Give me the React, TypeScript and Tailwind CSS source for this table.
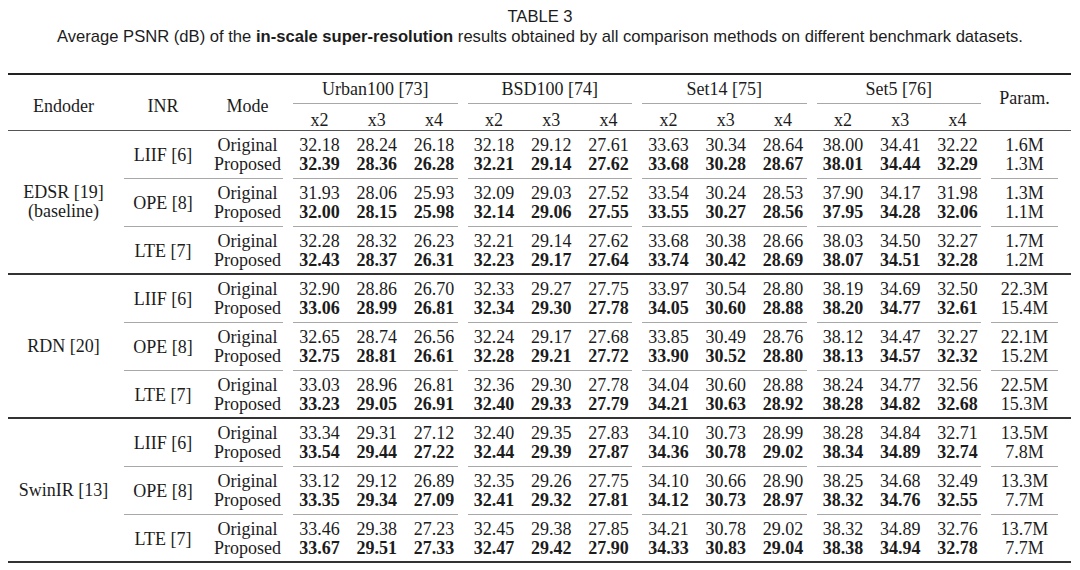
const serif = { fontFamily: '"Liberation Serif", "Times New Roman", serif' };

type Group = { inr: string; orig: string[]; prop: string[] };
type Block = { enc: string[]; groups: Group[] };

const blocks: Block[] = [
  {
    enc: ["EDSR [19]", "(baseline)"],
    groups: [
      {
        inr: "LIIF [6]",
        orig: ["32.18", "28.24", "26.18", "32.18", "29.12", "27.61", "33.63", "30.34", "28.64", "38.00", "34.41", "32.22", "1.6M"],
        prop: ["32.39", "28.36", "26.28", "32.21", "29.14", "27.62", "33.68", "30.28", "28.67", "38.01", "34.44", "32.29", "1.3M"],
      },
      {
        inr: "OPE [8]",
        orig: ["31.93", "28.06", "25.93", "32.09", "29.03", "27.52", "33.54", "30.24", "28.53", "37.90", "34.17", "31.98", "1.3M"],
        prop: ["32.00", "28.15", "25.98", "32.14", "29.06", "27.55", "33.55", "30.27", "28.56", "37.95", "34.28", "32.06", "1.1M"],
      },
      {
        inr: "LTE [7]",
        orig: ["32.28", "28.32", "26.23", "32.21", "29.14", "27.62", "33.68", "30.38", "28.66", "38.03", "34.50", "32.27", "1.7M"],
        prop: ["32.43", "28.37", "26.31", "32.23", "29.17", "27.64", "33.74", "30.42", "28.69", "38.07", "34.51", "32.28", "1.2M"],
      },
    ],
  },
  {
    enc: ["RDN [20]"],
    groups: [
      {
        inr: "LIIF [6]",
        orig: ["32.90", "28.86", "26.70", "32.33", "29.27", "27.75", "33.97", "30.54", "28.80", "38.19", "34.69", "32.50", "22.3M"],
        prop: ["33.06", "28.99", "26.81", "32.34", "29.30", "27.78", "34.05", "30.60", "28.88", "38.20", "34.77", "32.61", "15.4M"],
      },
      {
        inr: "OPE [8]",
        orig: ["32.65", "28.74", "26.56", "32.24", "29.17", "27.68", "33.85", "30.49", "28.76", "38.12", "34.47", "32.27", "22.1M"],
        prop: ["32.75", "28.81", "26.61", "32.28", "29.21", "27.72", "33.90", "30.52", "28.80", "38.13", "34.57", "32.32", "15.2M"],
      },
      {
        inr: "LTE [7]",
        orig: ["33.03", "28.96", "26.81", "32.36", "29.30", "27.78", "34.04", "30.60", "28.88", "38.24", "34.77", "32.56", "22.5M"],
        prop: ["33.23", "29.05", "26.91", "32.40", "29.33", "27.79", "34.21", "30.63", "28.92", "38.28", "34.82", "32.68", "15.3M"],
      },
    ],
  },
  {
    enc: ["SwinIR [13]"],
    groups: [
      {
        inr: "LIIF [6]",
        orig: ["33.34", "29.31", "27.12", "32.40", "29.35", "27.83", "34.10", "30.73", "28.99", "38.28", "34.84", "32.71", "13.5M"],
        prop: ["33.54", "29.44", "27.22", "32.44", "29.39", "27.87", "34.36", "30.78", "29.02", "38.34", "34.89", "32.74", "7.8M"],
      },
      {
        inr: "OPE [8]",
        orig: ["33.12", "29.12", "26.89", "32.35", "29.26", "27.75", "34.10", "30.66", "28.90", "38.25", "34.68", "32.49", "13.3M"],
        prop: ["33.35", "29.34", "27.09", "32.41", "29.32", "27.81", "34.12", "30.73", "28.97", "38.32", "34.76", "32.55", "7.7M"],
      },
      {
        inr: "LTE [7]",
        orig: ["33.46", "29.38", "27.23", "32.45", "29.38", "27.85", "34.21", "30.78", "29.02", "38.32", "34.89", "32.76", "13.7M"],
        prop: ["33.67", "29.51", "27.33", "32.47", "29.42", "27.90", "34.33", "30.83", "29.04", "38.38", "34.94", "32.78", "7.7M"],
      },
    ],
  },
];

const datasets = ["Urban100 [73]", "BSD100 [74]", "Set14 [75]", "Set5 [76]"];

function MidRule() {
  return (
    <div className="flex h-px">
      <div className="w-[169px] px-[5px]"><div className="h-px bg-[#a8a8a8]" /></div>
      {datasets.map((d) => (
        <div key={d} className="w-[174.5px] px-[5px]"><div className="h-px bg-[#a8a8a8]" /></div>
      ))}
      <div className="w-[77px] px-[5px]"><div className="h-px bg-[#a8a8a8]" /></div>
    </div>
  );
}

function InrRow({ g, last }: { g: Group; last: boolean }) {
  return (
    <div className={`flex ${last ? "h-[46px]" : "h-[47px]"} pt-[5px] leading-[19px]`}>
      <div className="w-[88px] flex items-center justify-center pb-[3px]">{g.inr}</div>
      <div className="w-[81px] flex flex-col items-center">
        <span>Original</span>
        <span>Proposed</span>
      </div>
      {[0, 1, 2, 3].map((d) => (
        <div key={d} className="w-[174.5px] grid grid-cols-3 pl-[3px]">
          {[0, 1, 2].map((c) => (
            <div key={c} className="flex flex-col items-center">
              <span>{g.orig[d * 3 + c]}</span>
              <span className="font-bold">{g.prop[d * 3 + c]}</span>
            </div>
          ))}
        </div>
      ))}
      <div className="w-[77px] flex flex-col items-center">
        <span>{g.orig[12]}</span>
        <span>{g.prop[12]}</span>
      </div>
    </div>
  );
}

export default function App() {
  return (
    <div className="w-[1080px] h-[570px] bg-white text-[#1c1c1c] overflow-hidden">
      <div className="pt-[7px] text-center text-[16.6px] leading-[20px]" style={{ fontFamily: '"Liberation Sans", Arial, sans-serif' }}>
        <div>TABLE 3</div>
        <div>
          Average PSNR (dB) of the <span className="font-bold">in-scale super-resolution</span> results obtained by all comparison methods on different benchmark datasets.
        </div>
      </div>

      <div className="ml-[8px] mt-[26px] w-[1063px] text-[18px]" style={serif}>
        <div className="h-[2px] bg-[#222]" />
        {/* header */}
        <div className="flex h-[56px] border-b border-[#555]">
          <div className="w-[111px] flex items-center justify-center pt-[8px]">Endoder</div>
          <div className="w-[88px] flex items-center justify-center pt-[8px]">INR</div>
          <div className="w-[81px] flex items-center justify-center pt-[8px]">Mode</div>
          {datasets.map((d) => (
            <div key={d} className="w-[174.5px] flex flex-col">
              <div className="h-[28px] flex items-center justify-center pt-[1px]">{d}</div>
              <div className="px-[5px]"><div className="h-px bg-[#a8a8a8]" /></div>
              <div className="h-[27px] grid grid-cols-3 items-center text-center pt-[3px] pl-[3px]">
                <span>x2</span>
                <span>x3</span>
                <span>x4</span>
              </div>
            </div>
          ))}
          <div className="w-[77px] flex items-center justify-center pb-[8px]">Param.</div>
        </div>
        {/* body */}
        {blocks.map((b, bi) => (
          <div key={bi} className="flex border-b-2 border-[#333]">
            <div className="w-[111px] flex flex-col items-center justify-center leading-[19px]">
              {b.enc.map((t) => (
                <span key={t}>{t}</span>
              ))}
            </div>
            <div className="flex flex-col">
              {b.groups.map((g, gi) => (
                <div key={gi}>
                  <InrRow g={g} last={gi === 2} />
                  {gi < 2 && <MidRule />}
                </div>
              ))}
            </div>
          </div>
        ))}
      </div>
    </div>
  );
}
